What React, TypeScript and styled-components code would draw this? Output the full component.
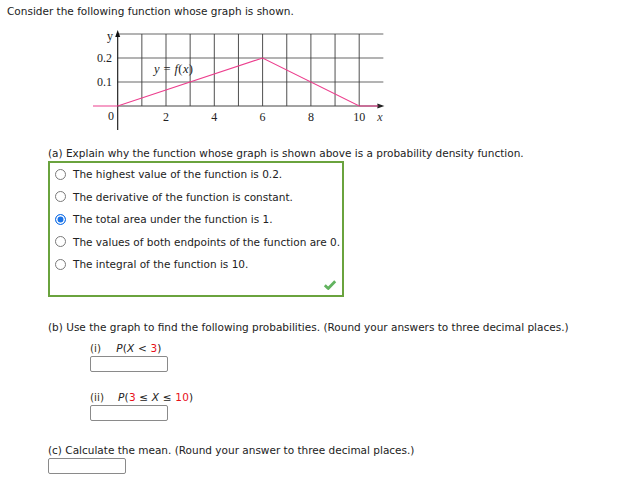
import React from "react";
import styled, { createGlobalStyle } from "styled-components";

const GlobalStyle = createGlobalStyle`
  html, body { margin: 0; padding: 0; background: #fff; }
  body {
    font-family: "DejaVu Sans", Verdana, sans-serif;
    font-size: 10.5px;
    color: #222;
  }
`;

const Page = styled.div`
  display: flex;
  flex-direction: column;
  align-items: flex-start;
  padding-top: 4px;
  width: 642px;
`;

const Line = styled.div<{ $x: number; $top: number }>`
  margin-left: ${(p) => p.$x}px;
  margin-top: ${(p) => p.$top}px;
  line-height: 14px;
  height: 14px;
  white-space: nowrap;
`;

const Graph = styled.svg`
  display: block;
  margin-left: 80px;
  margin-top: 8px;
  font-family: "Liberation Serif", "Times New Roman", serif;
`;

const AnswerBox = styled.div`
  margin-left: 48px;
  margin-top: 1px;
  width: 296px;
  height: 136px;
  box-sizing: border-box;
  border: 2px solid #6aa33e;
  position: relative;
  display: flex;
  flex-direction: column;
`;

const Option = styled.label`
  display: flex;
  align-items: center;
  height: 22.5px;
  padding-left: 5px;
  gap: 7px;
  white-space: nowrap;
`;

const Radio = styled.span<{ $checked?: boolean }>`
  width: 11px;
  height: 11px;
  box-sizing: border-box;
  border-radius: 50%;
  flex: none;
  background: ${(p) => (p.$checked ? "#1a73e8" : "#fff")};
  border: 1px solid ${(p) => (p.$checked ? "#1a73e8" : "#7a7a7a")};
  box-shadow: ${(p) => (p.$checked ? "inset 0 0 0 1.5px #fff" : "none")};
`;

const Check = styled.svg`
  position: absolute;
  right: 5px;
  bottom: 4px;
`;

const SubRow = styled.div<{ $top: number }>`
  display: flex;
  margin-left: 90px;
  margin-top: ${(p) => p.$top}px;
  line-height: 14px;
  height: 14px;
  white-space: nowrap;
`;

const SubLabel = styled.span<{ $gap: number }>`
  color: #3a3320;
  margin-right: ${(p) => p.$gap}px;
`;

const Math = styled.span`
  letter-spacing: 0.2px;
`;

const Var = styled.i`
  font-style: italic;
`;

const Num = styled.span`
  color: #e8101a;
`;

const Input = styled.div<{ $x: number }>`
  margin-left: ${(p) => p.$x}px;
  margin-top: 1px;
  width: 78px;
  height: 16px;
  box-sizing: border-box;
  border: 1px solid #8a8a8a;
  border-radius: 2px;
  background: #fff;
`;

const X0 = 37.7;
const U = 24.15;
const gx = (n: number) => X0 + U * n;
const gy = (v: number) => 80 - v * 240;

function FunctionGraph() {
  const verticals = [1, 2, 3, 4, 5, 6, 7, 8, 9, 10];
  const horizontals = [0.1, 0.2, 0.3];
  const right = gx(11);
  return (
    <Graph width={330} height={108} viewBox="0 0 330 108">
      {horizontals.map((v) => (
        <line key={v} x1={X0} x2={right} y1={gy(v)} y2={gy(v)} stroke="#9a9a9a" strokeWidth={1.4} />
      ))}
      {verticals.map((n) => (
        <line key={n} x1={gx(n)} x2={gx(n)} y1={gy(0.3)} y2={gy(0)} stroke="#3c3c3c" strokeWidth={0.9} />
      ))}
      <line x1={X0} x2={right - 2} y1={gy(0)} y2={gy(0)} stroke="#444" strokeWidth={1} />
      <polygon points={`${right + 1},${gy(0)} ${right - 6},${gy(0) - 2.5} ${right - 6},${gy(0) + 2.5}`} fill="#222" />
      <line x1={X0} x2={X0} y1={gy(0.3) - 1} y2={104} stroke="#111" strokeWidth={1.1} />
      <polygon points={`${X0},${gy(0.3) - 4} ${X0 - 2.5},${gy(0.3) + 3} ${X0 + 2.5},${gy(0.3) + 3}`} fill="#111" />
      <polyline
        points={`13,${gy(0)} ${X0},${gy(0)} ${gx(6)},${gy(0.2)} ${gx(10)},${gy(0)} ${right - 5},${gy(0)}`}
        fill="none"
        stroke="#ec3f8e"
        strokeWidth={1.1}
      />
      <text x={30} y={14} fontSize={12} fill="#222" textAnchor="middle">y</text>
      <text x={32} y={35.7} fontSize={12} fill="#222" textAnchor="end">0.2</text>
      <text x={32} y={59.7} fontSize={12} fill="#222" textAnchor="end">0.1</text>
      <text x={31} y={94} fontSize={12} fill="#222" textAnchor="middle">0</text>
      {[2, 4, 6, 8, 10].map((n) => (
        <text key={n} x={gx(n)} y={94.5} fontSize={12} fill="#222" textAnchor="middle">
          {n}
        </text>
      ))}
      <text x={300} y={94.5} fontSize={12} fill="#333" fontStyle="italic" textAnchor="middle">x</text>
      <text x={74} y={47} fontSize={12.5} fill="#222" letterSpacing={0.4}>
        <tspan fontStyle="italic">y</tspan>
        <tspan> = </tspan>
        <tspan fontStyle="italic">f</tspan>
        <tspan>(</tspan>
        <tspan fontStyle="italic">x</tspan>
        <tspan>)</tspan>
      </text>
    </Graph>
  );
}

const options = [
  { text: "The highest value of the function is 0.2.", checked: false },
  { text: "The derivative of the function is constant.", checked: false },
  { text: "The total area under the function is 1.", checked: true },
  { text: "The values of both endpoints of the function are 0.", checked: false },
  { text: "The integral of the function is 10.", checked: false },
];

export default function App() {
  return (
    <>
      <GlobalStyle />
      <Page>
        <Line $x={7} $top={0}>Consider the following function whose graph is shown.</Line>
        <FunctionGraph />
        <Line $x={48} $top={12}>
          (a) Explain why the function whose graph is shown above is a probability density function.
        </Line>
        <AnswerBox>
          {options.map((o) => (
            <Option key={o.text}>
              <Radio $checked={o.checked} />
              <span>{o.text}</span>
            </Option>
          ))}
          <Check width={14} height={12} viewBox="0 0 14 12">
            <path d="M1.8 6.2 L5.2 9.4 L12.2 2.2" fill="none" stroke="#62b35f" strokeWidth={2.8} strokeLinejoin="round" />
          </Check>
        </AnswerBox>
        <Line $x={48} $top={23}>
          (b) Use the graph to find the following probabilities. (Round your answers to three decimal places.)
        </Line>
        <SubRow $top={7}>
          <SubLabel $gap={15}>(i)</SubLabel>
          <Math>
            <Var>P</Var>(<Var>X</Var> &lt; <Num>3</Num>)
          </Math>
        </SubRow>
        <Input $x={90} />
        <SubRow $top={18}>
          <SubLabel $gap={14}>(ii)</SubLabel>
          <Math>
            <Var>P</Var>(<Num>3</Num> ≤ <Var>X</Var> ≤ <Num>10</Num>)
          </Math>
        </SubRow>
        <Input $x={90} />
        <Line $x={48} $top={22}>
          (c) Calculate the mean. (Round your answer to three decimal places.)
        </Line>
        <Input $x={48} />
      </Page>
    </>
  );
}
